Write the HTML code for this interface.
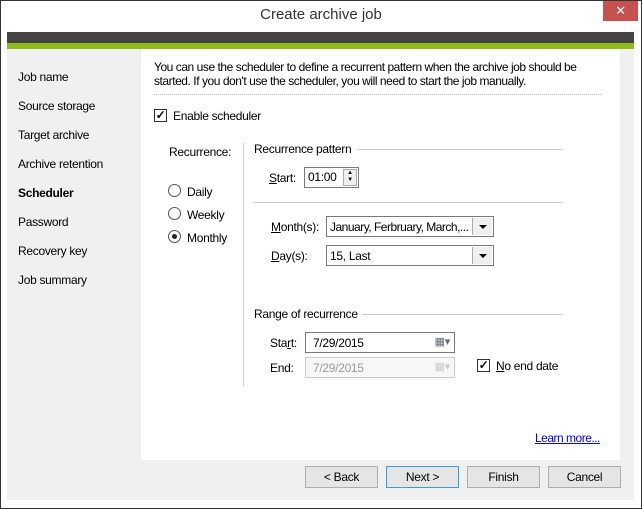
<!DOCTYPE html>
<html><head><style>
*{box-sizing:border-box;margin:0;padding:0}
body{width:642px;height:509px;position:relative;font-family:"Liberation Sans",sans-serif;font-size:12px;letter-spacing:-0.3px;color:#000;background:#fff;overflow:hidden}
.a{position:absolute;white-space:nowrap}
.win{left:0;top:0;width:642px;height:509px;border:1px solid #333;background:#fff}
.nav div{position:absolute;left:18px;white-space:nowrap}
.box{position:absolute;background:#fff;border:1px solid #7a7a7a;padding:3px 4px;font-size:12px;white-space:nowrap;overflow:hidden}
.dd{position:absolute;right:1px;top:1px;bottom:1px;width:20px;border-left:1px solid #ababab;background:#f0f0f0}
.dd:after{content:"";position:absolute;left:6px;top:7px;border-left:4px solid transparent;border-right:4px solid transparent;border-top:4px solid #000}
.btn{position:absolute;top:466px;width:73px;height:22px;border:1px solid #adadad;background:#e5e5e5;text-align:center;line-height:20px}
.rad{position:absolute;width:13px;height:13px;border:1px solid #555;border-radius:50%;background:#fff}
.cb{position:absolute;width:13px;height:13px;border:1px solid #333;background:#fff;font-size:12px;line-height:11px;text-align:center;font-weight:bold}
</style></head><body>
<div class="a win"></div>
<div class="a" style="left:0;top:6px;width:642px;text-align:center;font-size:15px;color:#333;letter-spacing:0">Create archive job</div>
<div class="a" style="left:603px;top:1px;width:35px;height:20px;background:#c75050;color:#fff;text-align:center;line-height:20px;font-size:13px">✕</div>
<div class="a" style="left:7px;top:32px;width:627px;height:11px;background:#444"></div>
<div class="a" style="left:7px;top:43px;width:627px;height:6px;background:#8fbc1a"></div>
<div class="a" style="left:7px;top:49px;width:627px;height:451px;background:#f0f0f0"></div>
<div class="a" style="left:141px;top:49px;width:479px;height:411px;background:#fff"></div>
<div class="nav a" style="left:0;top:0">
<div style="top:70px">Job name</div>
<div style="top:99px">Source storage</div>
<div style="top:128px">Target archive</div>
<div style="top:157px">Archive retention</div>
<div style="top:186px;font-weight:bold">Scheduler</div>
<div style="top:215px">Password</div>
<div style="top:244px">Recovery key</div>
<div style="top:273px">Job summary</div>
</div>
<div class="a" style="left:154px;top:60px;line-height:14px;letter-spacing:-0.45px">You can use the scheduler to define a recurrent pattern when the archive job should be<br>started. If you don't use the scheduler, you will need to start the job manually.</div>
<div class="a" style="left:154px;top:94px;width:447px;border-top:1px dotted #bbb"></div>
<div class="cb" style="left:154px;top:109px">✓</div>
<div class="a" style="left:173px;top:109px">Enable scheduler</div>
<div class="a" style="left:169px;top:145px">Recurrence:</div>
<div class="a" style="left:243px;top:143px;height:243px;border-left:1px solid #ccc"></div>
<div class="rad" style="left:168px;top:184px"></div><div class="a" style="left:187px;top:185px">Daily</div>
<div class="rad" style="left:168px;top:207px"></div><div class="a" style="left:187px;top:208px">Weekly</div>
<div class="rad" style="left:168px;top:230px"><div class="a" style="left:3px;top:3px;width:5px;height:5px;border-radius:50%;background:#222"></div></div><div class="a" style="left:187px;top:231px">Monthly</div>
<div class="a" style="left:254px;top:142px;background:#fff;padding-right:3px">Recurrence pattern</div>
<div class="a" style="left:357px;top:149px;width:206px;border-top:1px solid #ccd"></div>
<div class="a" style="left:269px;top:171px"><u>S</u>tart:</div>
<div class="box" style="left:304px;top:167px;width:55px;height:21px;padding:2px 3px">01:00<div class="a" style="right:1px;top:1px;width:14px;height:17px;background:#eee;border:1px solid #aaa;font-size:6px;line-height:7px;text-align:center">▲<br>▼</div></div>
<div class="a" style="left:253px;top:202px;width:310px;border-top:1px solid #ccd"></div>
<div class="a" style="left:271px;top:220px"><u>M</u>onth(s):</div>
<div class="box" style="left:326px;top:216px;width:168px;height:21px;padding:3px 3px;letter-spacing:-0.5px">January, Ferbruary, March,...<div class="dd"></div></div>
<div class="a" style="left:271px;top:249px"><u>D</u>ay(s):</div>
<div class="box" style="left:326px;top:245px;width:168px;height:21px;padding:3px 3px">15, Last<div class="dd"></div></div>
<div class="a" style="left:254px;top:307px;background:#fff;padding-right:4px">Range of recurrence</div>
<div class="a" style="left:362px;top:314px;width:201px;border-top:1px solid #ccd"></div>
<div class="a" style="left:270px;top:336px">Sta<u>r</u>t:</div>
<div class="box" style="left:305px;top:332px;width:150px;height:21px;padding:3px 7px">7/29/2015<span class="a" style="right:4px;top:2px;color:#667;font-size:11px">▦▾</span></div>
<div class="a" style="left:270px;top:361px">End:</div>
<div class="box" style="left:305px;top:357px;width:150px;height:21px;padding:3px 7px;border-color:#ccc;color:#999;background:#f7f7f7">7/29/2015<span class="a" style="right:4px;top:2px;color:#ccc;font-size:11px">▦▾</span></div>
<div class="cb" style="left:477px;top:359px">✓</div>
<div class="a" style="left:496px;top:359px"><u>N</u>o end date</div>
<div class="a" style="left:535px;top:431px;color:#00f;text-decoration:underline;letter-spacing:-0.5px">Learn more...</div>
<div class="btn" style="left:305px">&lt; Back</div>
<div class="btn" style="left:386px;border-color:#3c9be8">Next &gt;</div>
<div class="btn" style="left:467px">Finish</div>
<div class="btn" style="left:548px">Cancel</div>
</body></html>
